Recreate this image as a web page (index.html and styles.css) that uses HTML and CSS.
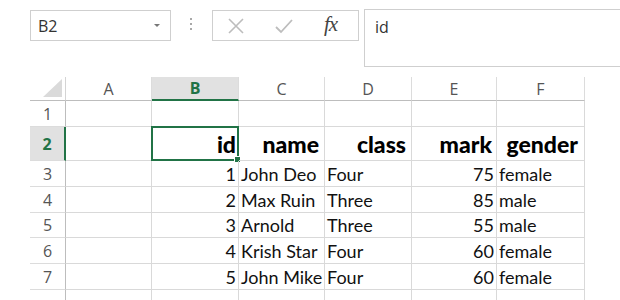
FILE: index.html
```html
<!DOCTYPE html>
<html>
<head>
<meta charset="utf-8">
<link rel="stylesheet" href="styles.css">
</head>
<body>
<div class="bar">
  <div class="namebox"><span class="ref">B2</span><span class="caret"></span></div>
  <div class="dots"><i></i><i></i><i></i></div>
  <div class="fxbox">
    <svg class="ico" width="18" height="18" viewBox="0 0 18 18"><path d="M2 2 L16 16 M16 2 L2 16" stroke="#bdbdbd" stroke-width="1.6" fill="none"/></svg>
    <svg class="ico" width="20" height="18" viewBox="0 0 20 18"><path d="M2 10 L7 15 L18 3" stroke="#bdbdbd" stroke-width="1.8" fill="none"/></svg>
    <span class="fx">fx</span>
  </div>
  <div class="formula">id</div>
</div>
<div class="sheet">
  <div class="corner"><span class="tri"></span></div>
  <div class="ch">A</div><div class="ch sel">B</div><div class="ch">C</div><div class="ch">D</div><div class="ch">E</div><div class="ch">F</div>

  <div class="rh">1</div><div class="c"></div><div class="c"></div><div class="c"></div><div class="c"></div><div class="c"></div><div class="c"></div>

  <div class="rh sel tall">2</div><div class="c tall"></div><div class="c tall b r active">id<span class="selbox"><span class="handle"></span></span></div><div class="c tall b r p5">name</div><div class="c tall b r p5">class</div><div class="c tall b r p4">mark</div><div class="c tall b r p6">gender</div>

  <div class="rh">3</div><div class="c"></div><div class="c r">1</div><div class="c">John Deo</div><div class="c">Four</div><div class="c r">75</div><div class="c">female</div>
  <div class="rh">4</div><div class="c"></div><div class="c r">2</div><div class="c">Max Ruin</div><div class="c">Three</div><div class="c r">85</div><div class="c">male</div>
  <div class="rh">5</div><div class="c"></div><div class="c r">3</div><div class="c">Arnold</div><div class="c">Three</div><div class="c r">55</div><div class="c">male</div>
  <div class="rh">6</div><div class="c"></div><div class="c r">4</div><div class="c">Krish Star</div><div class="c">Four</div><div class="c r">60</div><div class="c">female</div>
  <div class="rh">7</div><div class="c"></div><div class="c r">5</div><div class="c">John Mike</div><div class="c">Four</div><div class="c r">60</div><div class="c">female</div>
  <div class="rh last"></div><div class="c last"></div><div class="c last"></div><div class="c last"></div><div class="c last"></div><div class="c last"></div><div class="c last"></div>
</div>
</body>
</html>
```
FILE: styles.css
```css
html, body { margin: 0; padding: 0; background: #fff; overflow: hidden; }
body { width: 620px; height: 300px; font-family: "Open Sans", "Noto Sans", sans-serif; }

.bar { height: 77px; display: flex; align-items: flex-start; padding-left: 30px; box-sizing: border-box; }
.namebox { margin-top: 10px; width: 141px; height: 31px; box-sizing: border-box; border: 1px solid #cfcfcf; display: flex; align-items: center; justify-content: space-between; padding: 0 10px 0 7px; }
.ref { font-size: 16px; color: #333; }
.caret { width: 0; height: 0; border-left: 3px solid transparent; border-right: 3px solid transparent; border-top: 3px solid #777; margin-top: -1px; }
.dots { margin: 18px 0 0 19px; width: 3px; display: flex; flex-direction: column; gap: 3px; }
.dots i { display: block; width: 2px; height: 2px; background: #a8a8a8; }
.fxbox { margin: 10px 0 0 19px; width: 147px; height: 31px; box-sizing: border-box; border: 1px solid #cfcfcf; display: flex; align-items: center; padding: 0 0 0 14px; }
.ico { display: block; }
.ico:first-child { margin-right: 29px; }
.ico:nth-child(2) { margin-right: 30px; }
.fx { font-family: "Liberation Serif", "DejaVu Serif", serif; font-style: italic; font-size: 21px; color: #444; letter-spacing: -1px; margin-top: -3px; }
.formula { margin: 9px 0 0 5px; flex: 1; height: 58px; box-sizing: border-box; border: 1px solid #cfcfcf; border-right: none; padding: 6px 0 0 10px; font-size: 16px; color: #333; }

.sheet { margin-left: 30px; display: grid; grid-template-columns: 36px 86px 87px 86px 87px 85px 88px; grid-template-rows: 24px 26px 34px 26px 26px 25px 26px 26px 10px; width: 555px; font-family: "Lato", "Open Sans", sans-serif; }
.corner { position: relative; border-right: 1px solid #d4d4d4; border-bottom: 1px solid #bdbdbd; }
.tri { position: absolute; right: 3px; bottom: 3px; width: 0; height: 0; border-left: 19px solid transparent; border-bottom: 18px solid #dadada; }
.ch { display: flex; align-items: center; justify-content: center; font-family: "Open Sans", sans-serif; font-size: 16px; color: #555; border-right: 1px solid #dcdcdc; border-bottom: 1px solid #bdbdbd; box-sizing: border-box; }
.ch.sel { background: #e1e1e1; color: #217346; font-weight: 700; border-bottom: 2px solid #217346; }
.rh { display: flex; align-items: center; justify-content: center; font-family: "Open Sans", sans-serif; font-size: 16px; color: #555; border-right: 1px solid #bdbdbd; border-bottom: 1px solid #dcdcdc; box-sizing: border-box; }
.rh.sel { background: #e1e1e1; color: #217346; font-weight: 700; border-right: 2px solid #217346; }
.c { position: relative; border-right: 1px solid #d9d9d9; border-bottom: 1px solid #d9d9d9; box-sizing: border-box; font-size: 18px; color: #111; display: flex; align-items: flex-end; padding: 0 0 1px 2px; white-space: nowrap; }
.c.r { justify-content: flex-end; padding: 0 2px 1px 0; }
.c.b { font-weight: 900; font-size: 23px; color: #000; padding-bottom: 2px; }
.c.p4 { padding-right: 4px; }
.c.p5 { padding-right: 5px; }
.c.p6 { padding-right: 6px; }
.last { border-bottom: none; }
.selbox { position: absolute; left: -1px; top: -1px; right: -1px; bottom: -1px; border: 2px solid #217346; pointer-events: none; }
.handle { position: absolute; right: -4px; bottom: -4px; width: 5px; height: 5px; background: #217346; border: 1px solid #fff; }
```
